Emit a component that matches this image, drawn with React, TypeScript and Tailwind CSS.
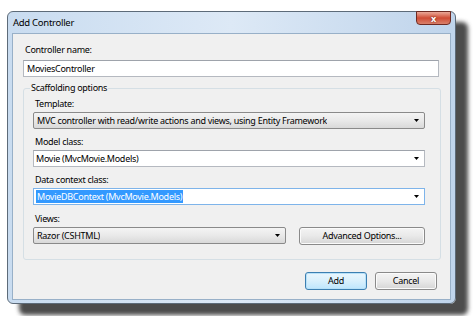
import type { ReactNode } from 'react'

const font = { fontFamily: '"Noto Sans", "Open Sans", sans-serif', letterSpacing: '-0.28px' }

function Arrow() {
  return (
    <svg width="5" height="3" viewBox="0 0 5 3" className="shrink-0">
      <path d="M0 0H5L2.5 3Z" fill="#000" />
    </svg>
  )
}

function Label({ children, className = '' }: { children: ReactNode; className?: string }) {
  return <div className={`h-[12px] leading-[12px] text-[9px] text-black pl-[2px] ${className}`}>{children}</div>
}

function DropList({ text, className = '' }: { text: string; className?: string }) {
  return (
    <div
      className={`h-[17px] flex items-center justify-between pl-[3px] pr-[5px] rounded-[2px] border border-[#8a8a8a] bg-gradient-to-b from-[#f4f4f4] via-[#e9e9e9] to-[#d9d9d9] text-[9px] text-black ${className}`}
    >
      <span className="truncate">{text}</span>
      <Arrow />
    </div>
  )
}

function EditCombo({ children, focused = false }: { children: ReactNode; focused?: boolean }) {
  return (
    <div
      className={`h-[17px] flex items-center justify-between pl-[2px] pr-[5px] bg-white border text-[9px] text-black ${
        focused ? 'border-[#7eb4ea]' : 'border-[#b5b9c0] border-t-[#9ea3ab]'
      }`}
    >
      {children}
      <Arrow />
    </div>
  )
}

function Button({ children, primary = false, className = '' }: { children: ReactNode; primary?: boolean; className?: string }) {
  return (
    <div
      className={`h-[18px] flex items-center justify-center rounded-[3px] border text-[9px] text-black ${
        primary
          ? 'border-[#3c7fb1] bg-gradient-to-b from-[#eaf6fd] via-[#d9f0fc] to-[#bee6fd] shadow-[inset_0_0_0_1px_#b8e1f8]'
          : 'border-[#8a8a8a] bg-gradient-to-b from-[#f4f4f4] via-[#e9e9e9] to-[#d6d6d6] shadow-[inset_0_0_0_1px_#fbfbfb]'
      } ${className}`}
    >
      {children}
    </div>
  )
}

export default function App() {
  return (
    <div className="w-[474px] h-[316px] bg-white overflow-hidden pl-[7px] pt-[11px]" style={font}>
      <div className="w-[449px] h-[293px] rounded-[6px] border border-[#5d6b79] bg-gradient-to-r from-[#c9dcf0] via-[#dde9f6] to-[#bfd4eb] shadow-[12px_11px_4px_rgba(45,45,45,0.85)] flex flex-col px-[4px] pb-[3px]">
        <div className="h-[21px] shrink-0 flex items-start justify-between pl-[1px]">
          <span className="mt-[5px] text-[9.5px] leading-[12px] text-black">Add Controller</span>
          <div className="w-[35px] h-[14px] -mt-px rounded-b-[4px] border border-[#6e2a22] bg-gradient-to-b from-[#e9a898] via-[#cf4b34] to-[#d9806a] flex items-center justify-center">
            <span className="text-white text-[9px] font-bold leading-none" style={{ textShadow: '0 0 2px #5a1a10' }}>
              x
            </span>
          </div>
        </div>

        <div className="flex-1 bg-[#f0f0f0] border border-[#98b0c8] flex flex-col pt-[10px] px-[10px]">
          <Label className="pl-[1px]">Controller name:</Label>
          <div className="mt-[4px] w-[416px] h-[17px] bg-white border border-[#b5b9c0] border-t-[#9ea3ab] flex items-center pl-[3px] text-[9px] text-black">
            MoviesController
          </div>

          <fieldset className="mt-[5px] w-[418px] border border-[#d5dfe5] rounded-[3px] pl-[9px] pr-[15px] pb-[14px]">
            <legend className="-ml-[3px] px-[1px] h-[12px] leading-[12px] text-[9px] text-black">Scaffolding options</legend>

            <Label className="mt-[4px]">Template:</Label>
            <DropList className="mt-[2px]" text="MVC controller with read/write actions and views, using Entity Framework" />

            <Label className="mt-[7px]">Model class:</Label>
            <div className="mt-[2px]">
              <EditCombo>
                <span>Movie (MvcMovie.Models)</span>
              </EditCombo>
            </div>

            <Label className="mt-[7px]">Data context class:</Label>
            <div className="mt-[2px]">
              <EditCombo focused>
                <span className="bg-[#3399ff] text-white leading-[13px] px-px">MovieDBContext (MvcMovie.Models)</span>
              </EditCombo>
            </div>

            <Label className="mt-[8px]">Views:</Label>
            <div className="mt-[2px] flex gap-[13px]">
              <DropList className="w-[253px]" text="Razor (CSHTML)" />
              <Button className="w-[126px]">Advanced Options...</Button>
            </div>
          </fieldset>

          <div className="mt-[12px] flex justify-end gap-[8px] pr-[3px]">
            <Button primary className="w-[62px]">
              Add
            </Button>
            <Button className="w-[62px]">Cancel</Button>
          </div>
        </div>
      </div>
    </div>
  )
}
